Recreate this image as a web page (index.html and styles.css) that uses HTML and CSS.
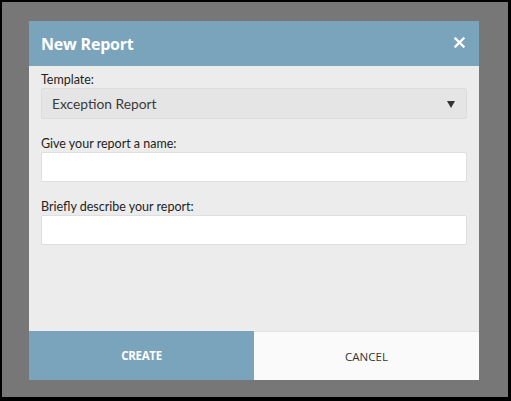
FILE: index.html
```html
<!DOCTYPE html>
<html lang="en">
<head>
    <meta charset="UTF-8">
    <title>New Report</title>
    <link rel="stylesheet" href="styles.css">
</head>
<body>
    <div class="backdrop">
        <div class="dialog">
            <div class="dialog-header">
                <h2 class="dialog-title">New Report</h2>
                <button class="close-btn" aria-label="Close">
                    <svg width="11" height="11" viewBox="0 0 11 11">
                        <path d="M1.5 1.5 L9.5 9.5 M9.5 1.5 L1.5 9.5" stroke="#fff" stroke-width="2.3" stroke-linecap="square"/>
                    </svg>
                </button>
            </div>

            <div class="dialog-body">
                <div class="field">
                    <label class="field-label">Template:</label>
                    <div class="select">
                        <span>Exception Report</span>
                        <span class="caret"></span>
                    </div>
                </div>
                <div class="field">
                    <label class="field-label">Give your report a name:</label>
                    <input class="text-input" type="text">
                </div>
                <div class="field">
                    <label class="field-label">Briefly describe your report:</label>
                    <input class="text-input" type="text">
                </div>
            </div>

            <div class="dialog-footer">
                <button class="btn btn-primary">CREATE</button>
                <button class="btn btn-secondary">CANCEL</button>
            </div>
        </div>
    </div>
</body>
</html>
```

FILE: styles.css
```css
html, body {
    margin: 0;
    height: 100%;
}
body {
    background-color: #000;
    font-family: Lato, "Open Sans", sans-serif;
    color: #333;
    padding: 2px 3px 4px 2px;
    box-sizing: border-box;
}
.backdrop {
    background-color: #777777;
    height: 100%;
    padding: 19px 0 0 27px;
    box-sizing: border-box;
}
.dialog {
    width: 450px;
    height: 359px;
    background-color: #ececec;
    display: flex;
    flex-direction: column;
}
.dialog-header {
    height: 45px;
    background-color: #7aa4bb;
    display: flex;
    align-items: center;
    justify-content: space-between;
    padding: 0 14px 0 12px;
}
.dialog-title {
    margin: 0;
    font-family: "Open Sans", sans-serif;
    color: #fff;
    font-size: 16px;
    font-weight: 700;
    letter-spacing: -0.2px;
}
.close-btn {
    background: none;
    border: none;
    padding: 0;
    width: 11px;
    height: 11px;
    display: flex;
    cursor: pointer;
    margin-top: -3px;
}
.dialog-body {
    flex: 1;
    padding: 6px 12px 0 12px;
}
.field {
    margin-bottom: 17px;
}
.field-label {
    display: block;
    font-size: 12.5px;
    line-height: 16px;
    height: 16px;
    color: #1e1e1e;
}
.select {
    height: 31px;
    box-sizing: border-box;
    background-color: #e5e5e5;
    border: 1px solid #dcdcdc;
    border-radius: 2px;
    display: flex;
    align-items: center;
    justify-content: space-between;
    padding: 0 11px 0 10px;
    font-size: 13.8px;
    color: #3a3a3a;
}
.caret {
    width: 0;
    height: 0;
    border-left: 4px solid transparent;
    border-right: 4px solid transparent;
    border-top: 7px solid #333;
    margin-top: 1px;
}
.text-input {
    display: block;
    width: 100%;
    height: 30px;
    box-sizing: border-box;
    background-color: #fff;
    border: 1px solid #dedede;
    border-radius: 2px;
    margin: 0;
}
.dialog-footer {
    height: 49px;
    display: flex;
}
.btn {
    flex: 1;
    border: none;
    font-family: "Open Sans", sans-serif;
    font-size: 11.5px;
    cursor: pointer;
}
.btn-primary {
    background-color: #7aa4bb;
    color: #fff;
    font-weight: 700;
    letter-spacing: -0.3px;
}
.btn-secondary {
    background-color: #fafafa;
    color: #333;
    border-top: 1px solid #e2e2e2;
}
```
